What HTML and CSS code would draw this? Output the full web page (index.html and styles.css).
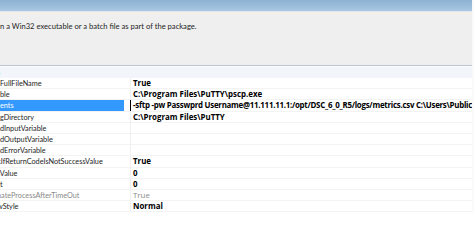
FILE: index.html
```html
<!DOCTYPE html>
<html lang="en">
<head>
  <meta charset="UTF-8">
  <title>Execute Process Task Properties</title>
  <link rel="stylesheet" href="styles.css">
</head>
<body>
  <div class="window">
    <div class="titlebar"></div>

    <!-- Description panel -->
    <div class="description">
      <p>n a Win32 executable or a batch file as part of the package.</p>
    </div>

    <!-- Property grid -->
    <div class="grid">
      <div class="row category">
        <span class="name cut">s</span>
        <span class="value"></span>
      </div>
      <div class="row">
        <span class="name">FullFileName</span>
        <span class="value">True</span>
      </div>
      <div class="row">
        <span class="name">ble</span>
        <span class="value">C:\Program Files\PuTTY\pscp.exe</span>
      </div>
      <div class="row selected">
        <span class="name">ents</span>
        <span class="value editing">-sftp -pw Passwprd Username@11.111.11.1:/opt/DSC_6_0_R5/logs/metrics.csv C:\Users\Public\Documents</span>
      </div>
      <div class="row">
        <span class="name">gDirectory</span>
        <span class="value">C:\Program Files\PuTTY</span>
      </div>
      <div class="row">
        <span class="name">dInputVariable</span>
        <span class="value"></span>
      </div>
      <div class="row">
        <span class="name">dOutputVariable</span>
        <span class="value"></span>
      </div>
      <div class="row">
        <span class="name">dErrorVariable</span>
        <span class="value"></span>
      </div>
      <div class="row">
        <span class="name cut">kIfReturnCodeIsNotSuccessValue</span>
        <span class="value">True</span>
      </div>
      <div class="row">
        <span class="name cut">sValue</span>
        <span class="value">0</span>
      </div>
      <div class="row">
        <span class="name">t</span>
        <span class="value">0</span>
      </div>
      <div class="row disabled">
        <span class="name cut">nateProcessAfterTimeOut</span>
        <span class="value">True</span>
      </div>
      <div class="row">
        <span class="name cut">wStyle</span>
        <span class="value">Normal</span>
      </div>
    </div>
  </div>
</body>
</html>
```

FILE: styles.css
```css
* {
  margin: 0;
  padding: 0;
  box-sizing: border-box;
}

body {
  background-color: #fff;
  font-family: Lato, "Open Sans", sans-serif;
  font-size: 7.6px;
  color: #1e1e1e;
  width: 474px;
  height: 248px;
  overflow: hidden;
}

.window {
  width: 474px;
  border-right: 2px solid #f8fafc;
}

.titlebar {
  height: 12px;
  background: linear-gradient(#8db2d3, #a9c7e3);
  border-bottom: 1px solid #dfe8f1;
}

/* Description panel */
.description {
  height: 54px;
  background-color: #efefef;
  border-top: 2px solid #f5efe8;
  border-bottom: 1px solid #bcc6d0;
  padding-top: 7px;
}

.description p {
  white-space: nowrap;
  line-height: 11px;
}

/* Property grid */
.grid {
  border-top: 1px solid #fbfcfd;
}

.row {
  display: grid;
  grid-template-columns: 130px 1fr;
  height: 11.2px;
  line-height: 11px;
  white-space: nowrap;
  overflow: hidden;
  border-bottom: 1px solid #f3f3f3;
}

.row .name {
  overflow: hidden;
  font-size: 7.3px;
}

.row .name.cut {
  text-indent: -3px;
}

.row .value {
  border-left: 1px solid #f0f0f0;
  padding-left: 2px;
  font-family: "Open Sans", sans-serif;
  font-weight: bold;
  font-size: 7.9px;
  color: #000;
  overflow: hidden;
}

.category {
  background-color: #f2f6fb;
  height: 11px;
  border-bottom: 1px solid #f2f6fb;
}

.category .value {
  border-left: none;
}

.selected .name {
  background-color: #3399ff;
  color: #fff;
  margin-right: 6px;
}

.selected .value.editing {
  border-left: 1px solid #000;
  letter-spacing: -0.25px;
}

.disabled .name,
.disabled .value {
  color: #8a8a8a;
  font-weight: normal;
}
```
